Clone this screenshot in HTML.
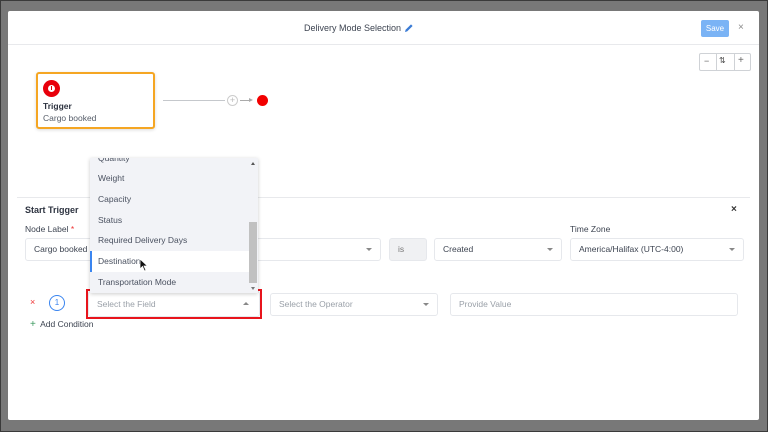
<!DOCTYPE html>
<html><head><meta charset="utf-8"><style>
*{box-sizing:border-box;margin:0;padding:0}
body{width:768px;height:432px;overflow:hidden;background:#787878;font-family:"Liberation Sans",sans-serif;position:relative}
.a{position:absolute}
.modal{left:8px;top:11px;width:751px;height:409px;background:#fff;border-radius:2px}
.t{font-size:8.5px;color:#3d4451}
.inp{position:absolute;height:23px;border:1px solid #e6e8ec;border-radius:3px;background:#fff;font-size:8.5px;color:#3d4451;padding-left:8px;line-height:21px}
.ph{color:#9aa0a8}
.car{position:absolute;right:8px;top:9px;width:0;height:0;border-left:3px solid transparent;border-right:3px solid transparent;border-top:3px solid #888}
.dd div{height:20.7px;line-height:20.7px;padding-left:8px;font-size:8.5px;color:#4a5160}
</style></head><body>
<div class="a" style="left:0;top:0;width:768px;height:432px;border:1px solid #3a3a3a"></div>
<div class="a modal"></div>
<!-- header -->
<div class="a" style="left:8px;top:44px;width:751px;height:1px;background:#e8e9ec"></div>
<div class="a t" style="left:304px;top:23px;font-size:9px;color:#3d4451">Delivery Mode Selection</div>
<svg class="a" style="left:404px;top:23px" width="10" height="10" viewBox="0 0 10 10"><path d="M1 9 L1.6 6.8 L7 1.4 L8.6 3 L3.2 8.4 Z" fill="#3a7bd5"/></svg>
<div class="a" style="left:701px;top:20px;width:28px;height:17px;background:#7ab3f5;border-radius:2px;color:#fff;font-size:8px;text-align:center;line-height:17px">Save</div>
<div class="a" style="left:738px;top:22px;font-size:10px;color:#888">×</div>
<!-- zoom controls -->
<div class="a" style="left:699px;top:53px;width:52px;height:18px;border:1px solid #cfd2d6;border-radius:2px;background:#fff"></div>
<div class="a" style="left:716px;top:53px;width:1px;height:18px;background:#cfd2d6"></div>
<div class="a" style="left:734px;top:53px;width:1px;height:18px;background:#cfd2d6"></div>
<div class="a" style="left:704px;top:56px;font-size:9px;color:#666">−</div>
<div class="a" style="left:719px;top:56px;font-size:8px;color:#444">⇅</div>
<div class="a" style="left:738px;top:55px;font-size:10px;color:#666">+</div>
<!-- trigger node -->
<div class="a" style="left:36px;top:72px;width:119px;height:57px;border:2px solid #f5a623;border-radius:3px;background:#fff;box-shadow:0 1px 3px rgba(0,0,0,.15)"></div>
<div class="a" style="left:43px;top:80px;width:17px;height:17px;border-radius:50%;background:#e8000b"></div>
<div class="a" style="left:47px;top:84px;width:9px;height:9px;border-radius:50%;background:#fff;border:1px solid #e8000b"></div>
<div class="a" style="left:51px;top:85.5px;width:1px;height:4px;background:#e8000b"></div>
<div class="a t" style="left:43px;top:101px;font-weight:bold;color:#2d3340">Trigger</div>
<div class="a t" style="left:43px;top:113px;color:#555c68">Cargo booked</div>
<div class="a" style="left:163px;top:100px;width:62px;height:1px;background:#c5c8cc"></div>
<div class="a" style="left:227px;top:95px;width:11px;height:11px;border:1px solid #ccc;border-radius:50%;font-size:9px;color:#bbb;text-align:center;line-height:9px">+</div>
<div class="a" style="left:240px;top:100px;width:10px;height:1px;background:#aaa"></div>
<div class="a" style="left:249px;top:98px;border-left:4px solid #aaa;border-top:2.5px solid transparent;border-bottom:2.5px solid transparent"></div>
<div class="a" style="left:257px;top:95px;width:11px;height:11px;border-radius:50%;background:#f20000"></div>
<!-- form -->
<div class="a" style="left:17px;top:197px;width:733px;height:1px;background:#e8e9ec"></div>
<div class="a t" style="left:25px;top:205px;font-size:9px;font-weight:bold;color:#2d3340">Start Trigger</div>
<div class="a" style="left:731px;top:204px;font-size:10px;color:#333;font-weight:bold">×</div>
<div class="a t" style="left:25px;top:224px">Node Label <span style="color:#e33">*</span></div>
<div class="a t" style="left:570px;top:224px">Time Zone</div>
<div class="inp" style="left:25px;top:238px;width:356px">Cargo booked<span class="car"></span></div>
<div class="inp" style="left:389px;top:238px;width:38px;background:#f0f1f3;color:#777">is</div>
<div class="inp" style="left:434px;top:238px;width:128px">Created<span class="car"></span></div>
<div class="inp" style="left:570px;top:238px;width:174px">America/Halifax (UTC-4:00)<span class="car"></span></div>
<!-- condition row -->
<div class="a" style="left:30px;top:297px;font-size:9px;color:#e33">×</div>
<div class="a" style="left:49px;top:295px;width:16px;height:16px;border:1.5px solid #3a85f0;border-radius:50%;font-size:8px;color:#3a85f0;text-align:center;line-height:13px">1</div>
<div class="a" style="left:86px;top:289px;width:176px;height:30px;border:2px solid #e8141c"></div>
<div class="inp ph" style="left:88px;top:291px;width:172px;height:26px;line-height:24px;border-color:#e6e8ec">Select the Field<span class="a" style="right:10px;top:10px;border-left:3px solid transparent;border-right:3px solid transparent;border-bottom:3px solid #888"></span></div>
<div class="inp ph" style="left:270px;top:293px;width:168px">Select the Operator<span class="car"></span></div>
<div class="inp ph" style="left:450px;top:293px;width:288px">Provide Value</div>
<div class="a t" style="left:30px;top:319px"><span style="color:#3c9a5f;font-size:10px">+</span>&nbsp; Add Condition</div>
<!-- dropdown -->
<div class="a dd" style="left:90px;top:158px;width:168px;height:135px;background:#f2f3f7;box-shadow:0 1px 4px rgba(0,0,0,.2);overflow:hidden">
<div style="margin-top:-10.5px">Quantity</div>
<div>Weight</div><div>Capacity</div><div>Status</div><div>Required Delivery Days</div>
<div style="background:#fff;border-left:2px solid #3a85f0;padding-left:6px;margin-right:9px">Destination</div>
<div>Transportation Mode</div>
</div>
<div class="a" style="left:249px;top:158px;width:9px;height:135px;background:#f2f3f7"></div>
<div class="a" style="left:249px;top:222px;width:8px;height:61px;background:#c1c1c1"></div>
<div class="a" style="left:251px;top:162px;border-left:2px solid transparent;border-right:2px solid transparent;border-bottom:3px solid #555"></div>
<div class="a" style="left:251px;top:287px;border-left:2px solid transparent;border-right:2px solid transparent;border-top:3px solid #777"></div>
<!-- cursor -->
<svg class="a" style="left:139px;top:258px" width="10" height="14" viewBox="0 0 10 14"><path d="M1 1 L1 11 L3.5 8.5 L5.5 13 L7 12.3 L5 8 L8.5 8 Z" fill="#111" stroke="#fff" stroke-width=".8"/></svg>
</body></html>
